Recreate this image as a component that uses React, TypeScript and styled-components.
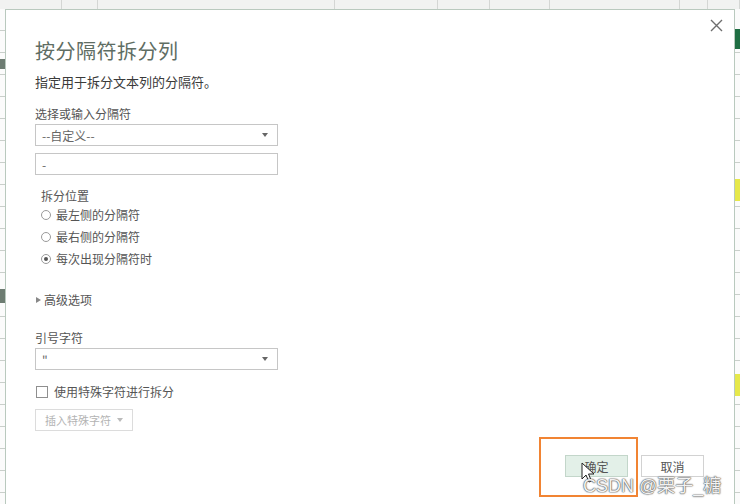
import styled, { createGlobalStyle } from 'styled-components';

const GlobalStyle = createGlobalStyle`
  html, body {
    margin: 0;
    padding: 0;
    background: #eef0ee;
  }
  * {
    box-sizing: border-box;
  }
`;

const Screen = styled.div`
  width: 740px;
  height: 504px;
  overflow: hidden;
  display: grid;
  grid-template-columns: 5px 1fr 5px;
  grid-template-rows: 9px 1fr;
  font-family: 'Noto Sans CJK SC', 'Noto Sans', sans-serif;
  background: #f4f5f4;
  position: relative;
`;

const SheetHeader = styled.div`
  grid-column: 1 / 4;
  background: #f1f2f1;
  display: grid;
  grid-template-columns: 62px 36px 237px 103px 52px 60px 130px 28px 32px;
  & > span {
    border-right: 1px solid #d4d6d4;
  }
`;

const SheetEdge = styled.div<{ $side: 'left' | 'right' }>`
  background-color: #fbfbfb;
  background-image: repeating-linear-gradient(
    to bottom,
    transparent 0,
    transparent 21px,
    #c9cfca 21px,
    #c9cfca 22px
  );
  display: flex;
  flex-direction: column;
  & > i {
    display: block;
    height: ${(p) => (p.$side === 'right' ? '20px' : '0')};
  }
`;

const EdgeMark = styled.span<{ $color: string; $top: number; $h: number }>`
  display: block;
  margin-top: ${(p) => p.$top}px;
  height: ${(p) => p.$h}px;
  background: ${(p) => p.$color};
`;

const Dialog = styled.div`
  background: #ffffff;
  border: 1px solid #b9c9be;
  border-bottom: none;
  padding: 28px 0 0 29px;
  display: flex;
  flex-direction: column;
  position: relative;
  color: #444;
`;

const CloseButton = styled.button`
  position: absolute;
  top: 6px;
  right: 9px;
  width: 18px;
  height: 18px;
  padding: 0;
  border: none;
  background: transparent;
  display: flex;
  align-items: center;
  justify-content: center;
`;

const Title = styled.h1`
  margin: 0;
  font-size: 20px;
  font-weight: 400;
  color: #5e6d63;
  letter-spacing: 0.5px;
  line-height: 26px;
`;

const Subtitle = styled.p`
  margin: 10px 0 0;
  font-size: 13px;
  line-height: 16px;
  color: #3a3a3a;
  font-weight: 400;
`;

const FieldLabel = styled.div<{ $mt: number; $indent?: boolean }>`
  margin-top: ${(p) => p.$mt}px;
  padding-left: ${(p) => (p.$indent ? '6px' : '0')};
  font-size: 12px;
  line-height: 16px;
  color: #555;
`;

const Box = styled.div<{ $mt: number }>`
  margin-top: ${(p) => p.$mt}px;
  width: 243px;
  height: 22px;
  border: 1px solid #c6c6c6;
  background: #fff;
  display: flex;
  align-items: center;
  justify-content: space-between;
  padding: 0 9px 0 6px;
  font-size: 12px;
  color: #666;
`;

const Caret = styled.span`
  width: 0;
  height: 0;
  border-left: 3px solid transparent;
  border-right: 3px solid transparent;
  border-top: 4px solid #666;
`;

const RadioList = styled.div`
  margin-top: 3px;
  padding-left: 6px;
  display: flex;
  flex-direction: column;
  gap: 6px;
`;

const RadioRow = styled.label`
  display: flex;
  align-items: center;
  gap: 5px;
  font-size: 12px;
  line-height: 16px;
  color: #555;
`;

const RadioDot = styled.span<{ $checked?: boolean }>`
  width: 10px;
  height: 10px;
  border-radius: 50%;
  border: 1px solid #9a9a9a;
  background: #fff;
  display: flex;
  align-items: center;
  justify-content: center;
  &::after {
    content: '';
    width: 4px;
    height: 4px;
    border-radius: 50%;
    background: ${(p) => (p.$checked ? '#555' : 'transparent')};
  }
`;

const Advanced = styled.div`
  margin-top: 25px;
  display: flex;
  align-items: center;
  gap: 3px;
  font-size: 12px;
  line-height: 16px;
  color: #555;
`;

const Triangle = styled.span`
  width: 0;
  height: 0;
  border-top: 3.5px solid transparent;
  border-bottom: 3.5px solid transparent;
  border-left: 5px solid #888;
  margin-left: 1px;
`;

const CheckRow = styled.label`
  margin-top: 14px;
  display: flex;
  align-items: center;
  gap: 6px;
  font-size: 12px;
  line-height: 16px;
  color: #555;
`;

const CheckBox = styled.span`
  width: 12px;
  height: 12px;
  border: 1px solid #8f8f8f;
  background: #fff;
  margin-left: 1px;
`;

const DisabledButton = styled.div`
  margin-top: 9px;
  width: 98px;
  height: 22px;
  border: 1px solid #dcdcdc;
  display: flex;
  align-items: center;
  justify-content: center;
  gap: 6px;
  font-size: 11px;
  color: #b3b3b3;
  & > span:last-child {
    border-top-color: #bbb;
  }
`;

const Footer = styled.div`
  margin-top: auto;
  margin-bottom: 27px;
  margin-right: 30px;
  display: flex;
  justify-content: flex-end;
  gap: 13px;
  position: relative;
`;

const ActionButton = styled.button<{ $primary?: boolean }>`
  width: 63px;
  height: 22px;
  padding: 0;
  font-family: inherit;
  font-size: 12px;
  color: #555;
  background: ${(p) => (p.$primary ? '#e3f0e8' : '#fff')};
  border: 1px solid ${(p) => (p.$primary ? '#c3d6ca' : '#d2d2d2')};
`;

const Highlight = styled.div`
  position: absolute;
  left: 539px;
  top: 437px;
  width: 99px;
  height: 60px;
  border: 2px solid #f18433;
  pointer-events: none;
`;

const Pointer = styled.svg`
  position: absolute;
  left: 581px;
  top: 462px;
`;

const Watermark = styled.div`
  position: absolute;
  left: 583px;
  top: 475px;
  font-family: 'Liberation Sans', 'Noto Sans CJK SC', sans-serif;
  font-size: 18px;
  line-height: 22px;
  color: #f2f2f2;
  text-shadow: 0 0 1px #555, 0 0 1px #555, 0 0 2px #777;
  white-space: nowrap;
  pointer-events: none;
`;

export default function App() {
  return (
    <Screen>
      <GlobalStyle />
      <SheetHeader>
        <span />
        <span />
        <span />
        <span />
        <span />
        <span />
        <span />
        <span />
        <span />
      </SheetHeader>
      <SheetEdge $side="left">
        <EdgeMark $color="#6d7c72" $top={50} $h={10} />
        <EdgeMark $color="#6d7c72" $top={220} $h={14} />
      </SheetEdge>
      <Dialog>
        <CloseButton aria-label="关闭">
          <svg width="13" height="13" viewBox="0 0 13 13">
            <path d="M1 1 L12 12 M12 1 L1 12" stroke="#6e6e6e" strokeWidth="1.4" fill="none" />
          </svg>
        </CloseButton>
        <Title>按分隔符拆分列</Title>
        <Subtitle>指定用于拆分文本列的分隔符。</Subtitle>
        <FieldLabel $mt={16}>选择或输入分隔符</FieldLabel>
        <Box $mt={2}>
          <span>--自定义--</span>
          <Caret />
        </Box>
        <Box $mt={7}>
          <span>-</span>
        </Box>
        <FieldLabel $mt={13} $indent>
          拆分位置
        </FieldLabel>
        <RadioList>
          <RadioRow>
            <RadioDot />
            最左侧的分隔符
          </RadioRow>
          <RadioRow>
            <RadioDot />
            最右侧的分隔符
          </RadioRow>
          <RadioRow>
            <RadioDot $checked />
            每次出现分隔符时
          </RadioRow>
        </RadioList>
        <Advanced>
          <Triangle />
          高级选项
        </Advanced>
        <FieldLabel $mt={22}>引号字符</FieldLabel>
        <Box $mt={2}>
          <span>"</span>
          <Caret />
        </Box>
        <CheckRow>
          <CheckBox />
          使用特殊字符进行拆分
        </CheckRow>
        <DisabledButton>
          <span>插入特殊字符</span>
          <Caret />
        </DisabledButton>
        <Footer>
          <ActionButton $primary>确定</ActionButton>
          <ActionButton>取消</ActionButton>
        </Footer>
      </Dialog>
      <SheetEdge $side="right">
        <i />
        <EdgeMark $color="#1f6e43" $top={0} $h={20} />
        <EdgeMark $color="#e6e84a" $top={130} $h={22} />
        <EdgeMark $color="#e6e84a" $top={173} $h={22} />
      </SheetEdge>
      <Highlight />
      <Pointer width="14" height="22" viewBox="0 0 14 22">
        <path
          d="M1 1 L1 17 L5 13 L8 20 L10.5 19 L7.5 12 L13 12 Z"
          fill="#fff"
          stroke="#222"
          strokeWidth="1"
          strokeLinejoin="round"
        />
      </Pointer>
      <Watermark>CSDN @栗子_糖</Watermark>
    </Screen>
  );
}
